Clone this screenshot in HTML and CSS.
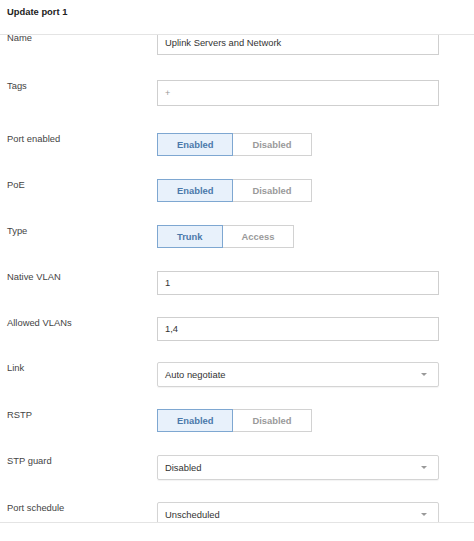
FILE: index.html
```html
<!DOCTYPE html>
<html>
<head>
<meta charset="utf-8">
<link rel="stylesheet" href="styles.css">
</head>
<body>
<div class="header">Update port 1</div>
<div class="content">
  <div class="form">
    <div class="row row-name">
      <div class="label label-name">Name</div>
      <div class="input">Uplink Servers and Network</div>
    </div>
    <div class="row row-tags">
      <div class="label">Tags</div>
      <div class="input input-tags"><span class="plus">+</span></div>
    </div>
    <div class="row">
      <div class="label">Port enabled</div>
      <div class="toggle"><span class="opt on">Enabled</span><span class="opt">Disabled</span></div>
    </div>
    <div class="row">
      <div class="label">PoE</div>
      <div class="toggle"><span class="opt on">Enabled</span><span class="opt">Disabled</span></div>
    </div>
    <div class="row">
      <div class="label">Type</div>
      <div class="toggle"><span class="opt on">Trunk</span><span class="opt">Access</span></div>
    </div>
    <div class="row">
      <div class="label">Native VLAN</div>
      <div class="input">1</div>
    </div>
    <div class="row row-short">
      <div class="label">Allowed VLANs</div>
      <div class="input">1,4</div>
    </div>
    <div class="row row-tall">
      <div class="label">Link</div>
      <div class="select"><span>Auto negotiate</span><span class="caret"></span></div>
    </div>
    <div class="row">
      <div class="label">RSTP</div>
      <div class="toggle"><span class="opt on">Enabled</span><span class="opt">Disabled</span></div>
    </div>
    <div class="row row-tall">
      <div class="label">STP guard</div>
      <div class="select"><span>Disabled</span><span class="caret"></span></div>
    </div>
    <div class="row">
      <div class="label">Port schedule</div>
      <div class="select"><span>Unscheduled</span><span class="caret"></span></div>
    </div>
  </div>
</div>
<div class="footer"></div>
</body>
</html>
```
FILE: styles.css
```css
html, body {
  margin: 0;
  padding: 0;
  background: #fff;
}
body {
  font-family: "Liberation Sans", Arial, sans-serif;
  font-size: 9.4px;
  color: #444;
  width: 474px;
  height: 541px;
  overflow: hidden;
}
.header {
  height: 35px;
  box-sizing: border-box;
  padding: 6px 0 0 7px;
  line-height: 12px;
  font-weight: bold;
  color: #222;
  border-bottom: 1px solid #e4e4e4;
  background: #fff;
}
.content {
  height: 487px;
  overflow: hidden;
}
.form {
  margin-top: -4px;
}
.row {
  display: flex;
  align-items: flex-start;
  height: 46px;
}
.row-name { height: 49px; }
.row-tags { height: 53px; }
.row-short { height: 45px; }
.row-tall { height: 47px; }
.label {
  width: 157px;
  padding-left: 7px;
  box-sizing: border-box;
  line-height: 12px;
  padding-top: 0;
  color: #444;
}
.label-name {
  padding-top: 1px;
}
.input {
  width: 282px;
  height: 24px;
  box-sizing: border-box;
  border: 1px solid #cfcfcf;
  padding-left: 7px;
  line-height: 22px;
  color: #333;
}
.input-tags {
  height: 26px;
  line-height: 24px;
}
.plus {
  color: #999;
  font-size: 9px;
}
.toggle {
  display: flex;
  height: 23px;
}
.opt {
  padding: 0 19px;
  box-sizing: border-box;
  border: 1px solid #d2d2d2;
  border-left: none;
  line-height: 21px;
  font-weight: bold;
  color: #9a9a9a;
  background: #fff;
}
.opt.on {
  border: 1px solid #7ea7d1;
  background: #e8f1fb;
  color: #4b79aa;
}
.select {
  width: 282px;
  height: 25px;
  box-sizing: border-box;
  border: 1px solid #d4d4d4;
  border-radius: 2px;
  box-shadow: 0 1px 1px rgba(0,0,0,0.05);
  padding: 0 11px 0 7px;
  display: flex;
  align-items: center;
  justify-content: space-between;
  color: #333;
}
.caret {
  width: 0;
  height: 0;
  border-left: 3px solid transparent;
  border-right: 3px solid transparent;
  border-top: 3px solid #999;
}
.footer {
  height: 18px;
  border-top: 1px solid #e4e4e4;
  background: #fff;
}
```
